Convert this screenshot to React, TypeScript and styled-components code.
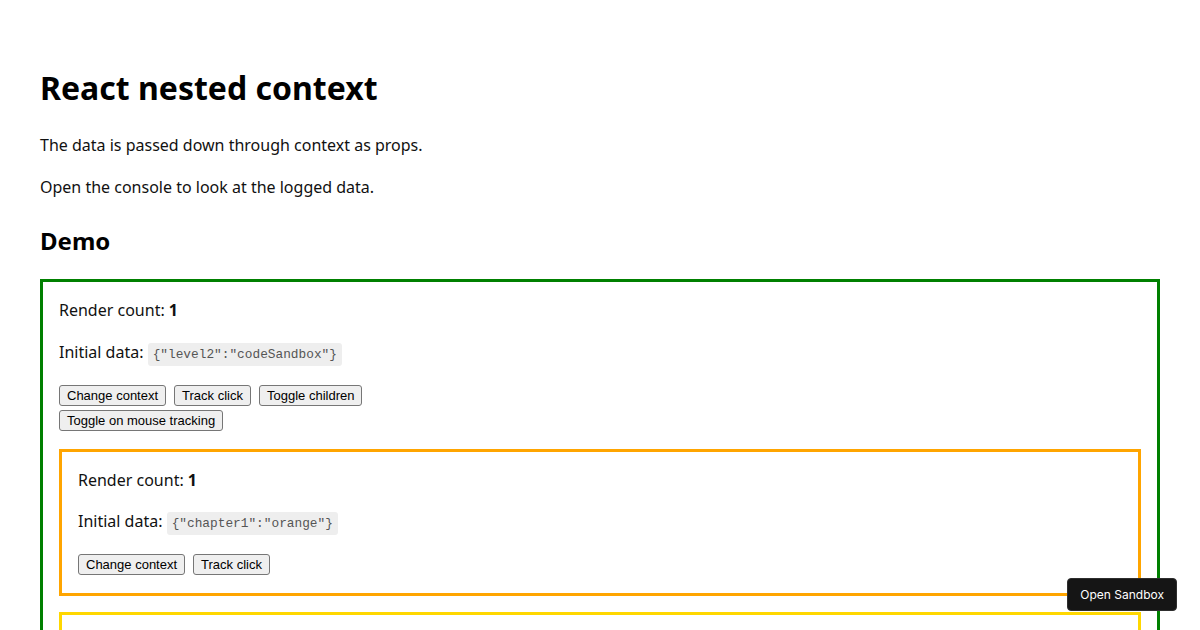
import React from "react";
import styled, { createGlobalStyle } from "styled-components";

const GlobalStyle = createGlobalStyle`
  html, body { margin: 0; padding: 0; background: #fff; }
  body {
    font-family: "Noto Sans", "Open Sans", sans-serif;
    font-size: 16px;
    line-height: 1.6;
    color: #111;
  }
`;

const Page = styled.main`
  padding: 69px 40px 40px;
`;

const Title = styled.h1`
  margin: 0 0 26px;
  font-size: 32px;
  line-height: 1.2;
  font-weight: 700;
  color: #000;
`;

const Text = styled.p`
  margin: 0 0 16px;
`;

const SubTitle = styled.h2`
  margin: 26px 0 24px;
  font-size: 24px;
  line-height: 1.2;
  font-weight: 700;
  color: #000;
`;

const Level = styled.section<{ $color: string }>`
  border: 3px solid ${(p) => p.$color};
  padding: 16px;
  margin-bottom: 16px;
`;

const Code = styled.code`
  font-family: "Liberation Mono", "Courier New", monospace;
  font-size: 0.8em;
  color: #555;
  background: #eee;
  padding: 4px 5px;
  border-radius: 3px;
`;

const Buttons = styled.div`
  margin: 0 0 16px;
  &:last-child { margin-bottom: 0; }
`;

const Button = styled.button`
  font-family: "Liberation Sans", Arial, sans-serif;
  font-size: 13px;
  line-height: 15px;
  color: #000;
  background: #efefef;
  border: 1px solid #767676;
  border-radius: 3px;
  padding: 2px 7px;
  margin: 0 8px 0 0;
  cursor: pointer;
`;

const Sandbox = styled.a`
  position: fixed;
  right: 23px;
  bottom: 19px;
  display: flex;
  align-items: center;
  height: 33px;
  box-sizing: border-box;
  padding: 0 12px;
  background: #151515;
  border: 1px solid #2e2e2e;
  border-radius: 4px;
  color: #fff;
  font-family: Inter, "Liberation Sans", sans-serif;
  font-size: 12px;
  text-decoration: none;
`;

type LevelProps = {
  color: string;
  data: object;
  extra?: boolean;
  children?: React.ReactNode;
};

function LevelBox({ color, data, extra, children }: LevelProps) {
  return (
    <Level $color={color}>
      <Text>
        Render count: <b>1</b>
      </Text>
      <Text>
        Initial data: <Code>{JSON.stringify(data)}</Code>
      </Text>
      <Buttons>
        <Button>Change context</Button>
        <Button>Track click</Button>
        {extra && (
          <>
            <Button>Toggle children</Button>
            <br />
            <Button>Toggle on mouse tracking</Button>
          </>
        )}
      </Buttons>
      {children}
    </Level>
  );
}

export default function App() {
  return (
    <>
      <GlobalStyle />
      <Page>
        <Title>React nested context</Title>
        <Text>The data is passed down through context as props.</Text>
        <Text>Open the console to look at the logged data.</Text>
        <SubTitle>Demo</SubTitle>
        <LevelBox color="#008000" data={{ level2: "codeSandbox" }} extra>
          <LevelBox color="#ffa500" data={{ chapter1: "orange" }} />
          <LevelBox color="#ffd700" data={{ chapter2: "yellow" }} />
        </LevelBox>
      </Page>
      <Sandbox href="#">Open Sandbox</Sandbox>
    </>
  );
}
